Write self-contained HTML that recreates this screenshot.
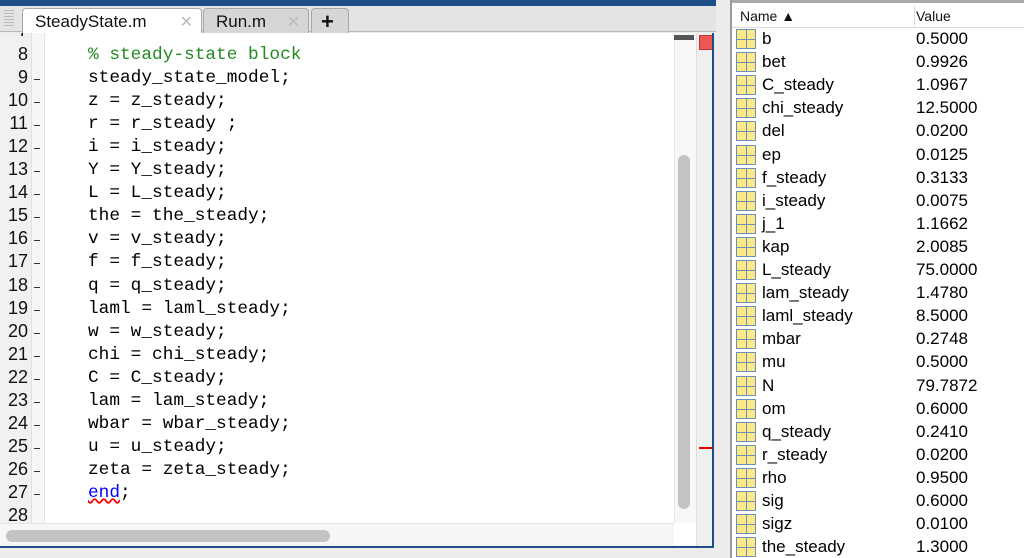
<!DOCTYPE html>
<html><head><meta charset="utf-8"><style>
*{margin:0;padding:0;box-sizing:border-box}
body{width:1024px;height:558px;overflow:hidden;background:#ececec;position:relative;font-family:"Liberation Sans",sans-serif}
.top{position:absolute;left:0;top:0;width:716px;height:6px;background:#1d4f86}
.tabs{position:absolute;left:0;top:6px;width:716px;height:26px;background:#e4e4e4;border-bottom:1px solid #b8b8b8}
.tab{position:absolute;top:2px;height:25px;border:1px solid #a8a8a8;border-bottom:none;border-radius:4px 4px 0 0;background:#d6d6d6;font-size:17px;padding:3px 0 0 12px;color:#111}
.tab .x{position:absolute;right:8px;top:3px;color:#bbb;font-size:16px}
.editor{position:absolute;left:0;top:33px;width:714px;height:515px;background:#fff;border-right:2px solid #1d4f86;border-bottom:2px solid #1d4f86;overflow:hidden}
.gut{position:absolute;left:0;top:0;width:31px;height:490px;background:#f1f1f1}
.gut2{position:absolute;left:31px;top:0;width:14px;height:490px;background:#f6f6f6;border-left:1px solid #e0e0e0;border-right:1px solid #e4e4e4}
.ln{position:absolute;left:0;width:28px;text-align:right;font-family:"Liberation Sans",sans-serif;font-size:18px;color:#111}
.dash{position:absolute;left:34px;width:6px;height:1px;background:#333}
.code{position:absolute;left:88px;font-family:"Liberation Mono",monospace;font-size:17.8px;color:#000;white-space:pre}
.vs{position:absolute;left:674px;top:0;width:22px;height:490px;background:#f7f7f7;border-left:1px solid #e6e6e6}
.vthumb{position:absolute;left:678px;top:122px;width:12px;height:354px;background:#c3c3c3;border-radius:6px}
.mk{position:absolute;left:696px;top:0;width:18px;height:515px;background:#f0f0f0;border-left:1px solid #ddd}
.hs{position:absolute;left:0;top:490px;width:674px;height:25px;background:#f6f6f6;border-top:1px solid #e4e4e4}
.hthumb{position:absolute;left:6px;top:497px;width:324px;height:12px;background:#c3c3c3;border-radius:6px}
.panel{position:absolute;left:730px;top:0;width:294px;height:558px;background:#fff;border-left:2px solid #9a9a9a;overflow:hidden}
.hdr{position:absolute;left:0;top:0;width:294px;height:28px;border-bottom:1px solid #ddd;border-top:3px solid #aaa;font-size:14px;color:#111}
.row{position:absolute;left:0;width:294px;height:23px;font-size:17px;color:#000}
.ic{position:absolute;left:4px;top:0px;width:20px;height:20px;border:1px solid #6f8fb3;background:
linear-gradient(#6f8fb3,#6f8fb3) 9px 0/1px 100% no-repeat,linear-gradient(#6f8fb3,#6f8fb3) 0 9px/100% 1px no-repeat,#fbe98a}
.nm{position:absolute;left:30px;top:0}
.vl{position:absolute;left:184px;top:0}
</style></head><body>
<div class="top"></div>
<div class="tabs">
<div style="position:absolute;left:4px;top:4px;width:10px;height:18px;background:repeating-linear-gradient(#bbb 0 1px,transparent 1px 3px)"></div>
<div class="tab" style="left:22px;width:180px;background:#fff;height:27px">SteadyState.m<span class="x">✕</span></div>
<div class="tab" style="left:203px;width:106px">Run.m<span class="x">✕</span></div>
<div class="tab" style="left:311px;width:38px;padding-left:9px;font-size:22px;font-weight:bold;top:2px;line-height:20px">+</div>
</div>
<div class="editor">
<div class="gut"></div><div class="gut2"></div>
<div id="lines"></div>
<div class="vs"></div><div class="vthumb"></div>
<div class="mk"><div style="position:absolute;left:2px;top:2px;width:14px;height:15px;background:#e55;border:1px solid #b33"></div><div style="position:absolute;left:2px;top:414px;width:14px;height:2px;background:#e00"></div></div>
<div style="position:absolute;left:674px;top:2px;width:20px;height:5px;background:#555"></div>
<div class="hs"></div><div class="hthumb"></div>
</div>
<div class="panel">
<div class="hdr"><span style="position:absolute;left:8px;top:5px">Name ▲</span><span style="position:absolute;left:182px;top:3px;height:20px;border-left:1px solid #ddd"></span><span style="position:absolute;left:184px;top:5px">Value</span></div>
<div id="rows"></div>
</div>
<script>
var code=[["8","","<span style='color:#228b22'>% steady-state block</span>"],["9","-","steady_state_model;"],["10","-","z = z_steady;"],["11","-","r = r_steady ;"],["12","-","i = i_steady;"],["13","-","Y = Y_steady;"],["14","-","L = L_steady;"],["15","-","the = the_steady;"],["16","-","v = v_steady;"],["17","-","f = f_steady;"],["18","-","q = q_steady;"],["19","-","laml = laml_steady;"],["20","-","w = w_steady;"],["21","-","chi = chi_steady;"],["22","-","C = C_steady;"],["23","-","lam = lam_steady;"],["24","-","wbar = wbar_steady;"],["25","-","u = u_steady;"],["26","-","zeta = zeta_steady;"],["27","-","<span style='color:#0000ff;text-decoration:underline wavy red'>end</span>;"],["28","",""]];
var h="";code.forEach(function(c,i){var y=11+i*23.05;h+="<div class='ln' style='top:"+y+"px'>"+c[0]+"</div>"+(c[1]?"<div class='dash' style='top:"+Math.round(y+12)+"px'></div>":"")+"<div class='code' style='top:"+(y+1)+"px'>"+c[2]+"</div>";});
h+="<div class='ln' style='top:-13px'>7</div>";
document.getElementById("lines").innerHTML=h;
var v=[["b","0.5000"],["bet","0.9926"],["C_steady","1.0967"],["chi_steady","12.5000"],["del","0.0200"],["ep","0.0125"],["f_steady","0.3133"],["i_steady","0.0075"],["j_1","1.1662"],["kap","2.0085"],["L_steady","75.0000"],["lam_steady","1.4780"],["laml_steady","8.5000"],["mbar","0.2748"],["mu","0.5000"],["N","79.7872"],["om","0.6000"],["q_steady","0.2410"],["r_steady","0.0200"],["rho","0.9500"],["sig","0.6000"],["sigz","0.0100"],["the_steady","1.3000"]];
h="";v.forEach(function(r,i){h+="<div class='row' style='top:"+(29+i*23.1)+"px'><div class='ic'></div><span class='nm'>"+r[0]+"</span><span class='vl'>"+r[1]+"</span></div>";});
document.getElementById("rows").innerHTML=h;
</script>
</body></html>
